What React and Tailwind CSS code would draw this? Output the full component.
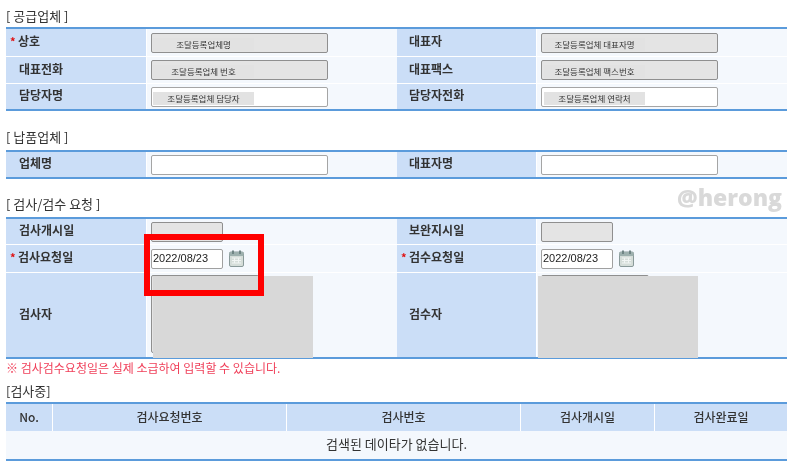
const grid = 'grid grid-cols-[140px_251px_139px_251px] gap-y-px';

function SectionTitle({ children, className }) {
  return <div className={`flex items-end text-[13px] leading-[16px] text-[#333] ${className}`}>{children}</div>;
}

function Label({ children, required, right, className = '' }) {
  return (
    <div className={`relative flex items-center bg-[#cbdef7] pb-[3px] text-[12px] font-semibold text-[#333] ${required || right ? 'pl-[12px]' : 'pl-[13px]'} ${className}`}>
      {required && <span className="absolute left-[4px] text-[11px] font-bold text-[#e01010]">*</span>}
      {children}
    </div>
  );
}

function Field({ children, className = '' }) {
  return <div className={`ml-px flex items-center bg-[#f4f8fd] pl-[4px] ${className}`}>{children}</div>;
}

function Box({ white, w = 'w-[177px]', h = 'h-[20px]', chip, chipLeft = 'left-px' }) {
  return (
    <div className={`relative ${w} ${h} rounded-[2px] border-[1.5px] ${white ? 'bg-white border-[#a5a5a5]' : 'bg-[#e4e4e4] border-[#8f8f8f]'}`}>
      {chip && (
        <div className={`absolute top-[4px] ${chipLeft} flex h-[13px] w-[101px] items-center justify-center bg-[#e2e2e2] text-[8.5px] text-[#333]`}>
          {chip}
        </div>
      )}
    </div>
  );
}

function CalendarIcon() {
  return (
    <svg width="15" height="17" viewBox="0 0 15 17" className="ml-[6px] shrink-0">
      <rect x="0.5" y="2" width="14" height="14.5" rx="1.5" fill="#d5ddd9" stroke="#8a9a9a" />
      <rect x="0.5" y="2" width="14" height="4" fill="#9db0ae" />
      <rect x="3" y="0.5" width="2" height="3.5" fill="#6f8484" />
      <rect x="10" y="0.5" width="2" height="3.5" fill="#6f8484" />
      <path d="M3 8h9M3 10.5h9M3 13h9M5.5 8v5M9.5 8v5" stroke="#f2f5f4" strokeWidth="1" fill="none" />
    </svg>
  );
}

function DateBox() {
  return (
    <>
      <div
        className="flex h-[20px] w-[72px] items-center rounded-[2px] border-[1.5px] border-[#a0a0a0] bg-white pl-px text-[11px] text-[#222]"
        style={{ fontFamily: '"Liberation Sans", sans-serif' }}
      >
        2022/08/23
      </div>
      <CalendarIcon />
    </>
  );
}

function Redacted({ className }) {
  return <div className={`absolute h-[82px] w-[160px] bg-[#d8d8d8] ${className}`} />;
}

export default function App() {
  return (
    <div
      className="relative h-[474px] w-[800px] overflow-hidden bg-white pl-[6px] text-[#333] blur-[0.3px]"
      style={{ fontFamily: '"Noto Sans CJK KR", "Noto Sans", sans-serif' }}
    >
      <div className="w-[781px]">
        <SectionTitle className="h-[27px] pb-[3px]">[ 공급업체 ]</SectionTitle>
        <div className={`${grid} border-y-2 border-[#5b9bdb]`}>
          <Label required className="h-[27px]">상호</Label>
          <Field><Box chip="조달등록업체명" /></Field>
          <Label right className="h-[27px]">대표자</Label>
          <Field><Box chip="조달등록업체 대표자명" chipLeft="left-[2px]" /></Field>
          <Label className="h-[26px]">대표전화</Label>
          <Field><Box chip="조달등록업체 번호" /></Field>
          <Label right className="h-[26px]">대표팩스</Label>
          <Field><Box chip="조달등록업체 팩스번호" chipLeft="left-[2px]" /></Field>
          <Label className="h-[25px]">담당자명</Label>
          <Field><Box white chip="조달등록업체 담당자" /></Field>
          <Label right className="h-[25px]">담당자전화</Label>
          <Field><Box white chip="조달등록업체 연락처" chipLeft="left-[2px]" /></Field>
        </div>

        <SectionTitle className="h-[39px] pb-[5px]">[ 납품업체 ]</SectionTitle>
        <div className={`${grid} border-y-2 border-[#5b9bdb]`}>
          <Label className="h-[25px]">업체명</Label>
          <Field><Box white /></Field>
          <Label right className="h-[25px]">대표자명</Label>
          <Field><Box white /></Field>
        </div>

        <SectionTitle className="h-[38px] pb-[5px]">[ 검사/검수 요청 ]</SectionTitle>
        <div className={`${grid} border-y-2 border-[#5b9bdb]`}>
          <Label className="h-[25px]">검사개시일</Label>
          <Field><Box w="w-[72px]" /></Field>
          <Label right className="h-[25px]">보완지시일</Label>
          <Field><Box w="w-[72px]" /></Field>
          <Label required className="h-[27px]">검사요청일</Label>
          <Field><DateBox /></Field>
          <Label required className="h-[27px]">검수요청일</Label>
          <Field><DateBox /></Field>
          <Label className="h-[84px]">검사자</Label>
          <Field className="items-start pt-[2px]"><Box w="w-[108px]" h="h-[78px]" /></Field>
          <Label right className="h-[84px]">검수자</Label>
          <Field className="items-start pt-[2px]"><Box w="w-[108px]" h="h-[78px]" /></Field>
        </div>

        <div className="flex h-[21px] items-center pb-[3px] text-[12px] text-[#f0405a]">
          ※ 검사검수요청일은 실제 소급하여 입력할 수 있습니다.
        </div>
        <SectionTitle className="h-[22px] pb-[3px]">[검사중]</SectionTitle>

        <div className="border-y-2 border-[#5b9bdb]">
          <div className="grid h-[27px] grid-cols-[46px_233px_233px_133px_132px] gap-x-px text-center text-[12px] font-medium leading-[26px]">
            <div className="bg-[#cbdef7]">No.</div>
            <div className="bg-[#cbdef7]">검사요청번호</div>
            <div className="bg-[#cbdef7]">검사번호</div>
            <div className="bg-[#cbdef7]">검사개시일</div>
            <div className="bg-[#cbdef7]">검사완료일</div>
          </div>
          <div className="flex h-[28px] items-center justify-center bg-[#f4f8fd] pb-[3px] text-[13px]">검색된 데이타가 없습니다.</div>
        </div>
      </div>

      <Redacted className="left-[153px] top-[276px]" />
      <Redacted className="left-[538px] top-[276px]" />
      <div className="absolute left-[144px] top-[234px] h-[62px] w-[120px] border-[6px] border-[#ff0000]" />
      <div
        className="absolute left-[677px] top-[179px] text-[23px] font-extrabold leading-[36px] text-[#d9d9d9]"
        style={{ fontFamily: '"Open Sans", sans-serif' }}
      >
        @herong
      </div>
    </div>
  );
}
